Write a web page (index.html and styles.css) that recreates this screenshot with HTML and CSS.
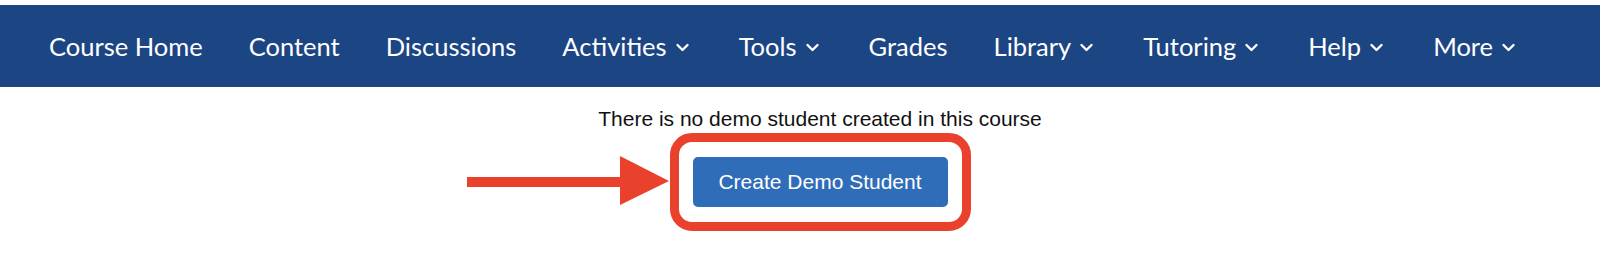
FILE: index.html
```html
<!DOCTYPE html>
<html lang="en">
<head>
    <meta charset="UTF-8">
    <meta name="viewport" content="width=device-width, initial-scale=1.0">
    <title>Demo Student</title>
    <link rel="stylesheet" href="styles.css">
</head>
<body>
    <nav class="navbar">
        <a class="nav-item" href="#">Course Home</a>
        <a class="nav-item" href="#">Content</a>
        <a class="nav-item" href="#">Discussions</a>
        <a class="nav-item" href="#">Activities <svg class="chevron" viewBox="0 0 14 9"><path d="M2 2l5 5 5-5"/></svg></a>
        <a class="nav-item" href="#">Tools <svg class="chevron" viewBox="0 0 14 9"><path d="M2 2l5 5 5-5"/></svg></a>
        <a class="nav-item" href="#">Grades</a>
        <a class="nav-item" href="#">Library <svg class="chevron" viewBox="0 0 14 9"><path d="M2 2l5 5 5-5"/></svg></a>
        <a class="nav-item" href="#">Tutoring <svg class="chevron" viewBox="0 0 14 9"><path d="M2 2l5 5 5-5"/></svg></a>
        <a class="nav-item" href="#">Help <svg class="chevron" viewBox="0 0 14 9"><path d="M2 2l5 5 5-5"/></svg></a>
        <a class="nav-item" href="#">More <svg class="chevron" viewBox="0 0 14 9"><path d="M2 2l5 5 5-5"/></svg></a>
    </nav>

    <main class="content">
        <p class="message">There is no demo student created in this course</p>
        <div class="highlight">
            <!-- annotation arrow pointing at the button -->
            <svg class="arrow" viewBox="0 0 202 49">
                <rect x="0" y="21" width="154" height="10"/>
                <polygon points="153,0 202,25 153,49"/>
            </svg>
            <button class="create-btn">Create Demo Student</button>
        </div>
    </main>
</body>
</html>
```

FILE: styles.css
```css
body {
    margin: 0;
    padding-top: 5px;
    background-color: #fff;
    font-family: "Liberation Sans", Arial, sans-serif;
}
.navbar {
    display: flex;
    align-items: center;
    gap: 46px;
    height: 82px;
    padding-left: 49px;
    background-color: #1c4584;
}
.nav-item {
    display: flex;
    align-items: center;
    color: #fff;
    text-decoration: none;
    font-family: Lato, "Noto Sans", sans-serif;
    font-size: 25.5px;
}
.chevron {
    width: 15px;
    height: 9px;
    margin-left: 8px;
    margin-right: 3px;
    margin-top: 2px;
    fill: none;
    stroke: #fff;
    stroke-width: 2.4;
    stroke-linecap: round;
    stroke-linejoin: round;
}
.content {
    display: flex;
    flex-direction: column;
    align-items: center;
    padding-left: 40px;
}
.message {
    margin: 20px 0 0;
    font-size: 21px;
    line-height: 24px;
    color: #111;
}
.highlight {
    position: relative;
    margin-top: 2px;
    padding: 15px 14px;
    border: 9px solid #e9412b;
    border-radius: 22px;
}
.arrow {
    position: absolute;
    left: -212px;
    top: 14px;
    width: 202px;
    height: 49px;
    fill: #e9412b;
}
.create-btn {
    display: block;
    width: 255px;
    height: 50px;
    border: none;
    border-radius: 5px;
    background-color: #2f6db8;
    color: #fff;
    font-family: "Liberation Sans", Arial, sans-serif;
    font-size: 21px;
    cursor: pointer;
}
```
